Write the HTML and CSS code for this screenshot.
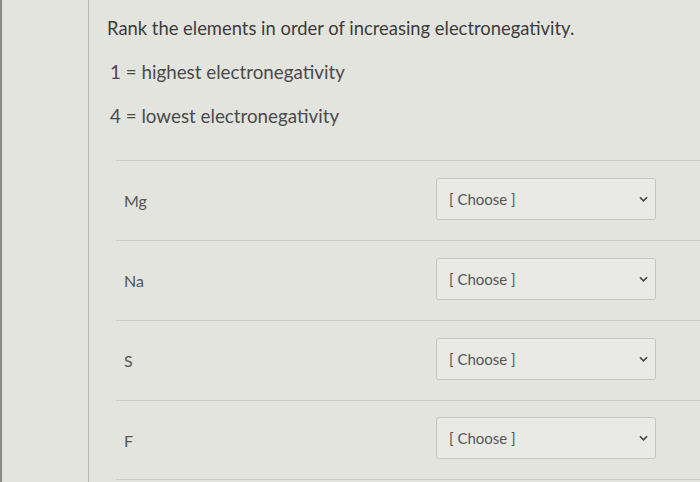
FILE: index.html
```html
<!DOCTYPE html>
<html>
<head>
<meta charset="utf-8">
<link rel="stylesheet" href="styles.css">
</head>
<body>
<div class="page">
  <div class="question">
    <p class="title">Rank the elements in order of increasing electronegativity.</p>
    <p class="line">1 = highest electronegativity</p>
    <p class="line">4 = lowest electronegativity</p>
  </div>
  <div class="rows">
    <div class="row">
      <span class="label">Mg</span>
      <div class="select-wrap">
        <select class="choose"><option>[ Choose ]</option></select>
        <svg class="chev" viewBox="0 0 10 6" width="9" height="6"><path d="M1 1 L5 5 L9 1" fill="none" stroke="#444" stroke-width="1.8"/></svg>
      </div>
    </div>
    <div class="row">
      <span class="label">Na</span>
      <div class="select-wrap">
        <select class="choose"><option>[ Choose ]</option></select>
        <svg class="chev" viewBox="0 0 10 6" width="9" height="6"><path d="M1 1 L5 5 L9 1" fill="none" stroke="#444" stroke-width="1.8"/></svg>
      </div>
    </div>
    <div class="row">
      <span class="label">S</span>
      <div class="select-wrap">
        <select class="choose"><option>[ Choose ]</option></select>
        <svg class="chev" viewBox="0 0 10 6" width="9" height="6"><path d="M1 1 L5 5 L9 1" fill="none" stroke="#444" stroke-width="1.8"/></svg>
      </div>
    </div>
    <div class="row">
      <span class="label">F</span>
      <div class="select-wrap">
        <select class="choose"><option>[ Choose ]</option></select>
        <svg class="chev" viewBox="0 0 10 6" width="9" height="6"><path d="M1 1 L5 5 L9 1" fill="none" stroke="#444" stroke-width="1.8"/></svg>
      </div>
    </div>
  </div>
</div>
</body>
</html>
```
FILE: styles.css
```css
html, body {
  margin: 0;
  padding: 0;
  height: 100%;
  overflow: hidden;
}
body {
  background: #e4e4df;
  border-left: 2px solid #8a8a86;
  box-sizing: border-box;
  font-family: Lato, "Open Sans", sans-serif;
}
.page {
  margin-left: 86px;
  border-left: 1px solid #b9b9b4;
  height: 100%;
  padding-left: 18px;
  box-sizing: border-box;
}
.question {
  padding-top: 15px;
  height: 160px;
  box-sizing: border-box;
}
.question p {
  margin: 0;
}
.title {
  font-size: 18.4px;
  color: #3c3c3c;
  line-height: 26px;
}
.line {
  font-size: 18.8px;
  color: #4a4a4a;
  line-height: 26px;
  margin-top: 18px !important;
  padding-left: 3px;
}
.rows {
  margin-left: 9px;
}
.row {
  display: flex;
  align-items: center;
  height: 80px;
  border-top: 1px solid #cdcdc8;
  box-sizing: border-box;
  padding-left: 8px;
}
.row:last-child {
  border-bottom: 1px solid #cdcdc8;
}
.label {
  font-size: 16px;
  color: #555;
  width: 312px;
}
.select-wrap {
  position: relative;
  width: 220px;
  height: 42px;
  margin-top: -4px;
}
.choose {
  appearance: none;
  -webkit-appearance: none;
  width: 100%;
  height: 100%;
  background: #e9eae5;
  border: 1px solid #c6c6c1;
  border-radius: 3px;
  font-family: Lato, "Open Sans", sans-serif;
  font-size: 15px;
  color: #555;
  padding-left: 12px;
  outline: none;
}
.chev {
  position: absolute;
  right: 8px;
  top: 18px;
}
```
